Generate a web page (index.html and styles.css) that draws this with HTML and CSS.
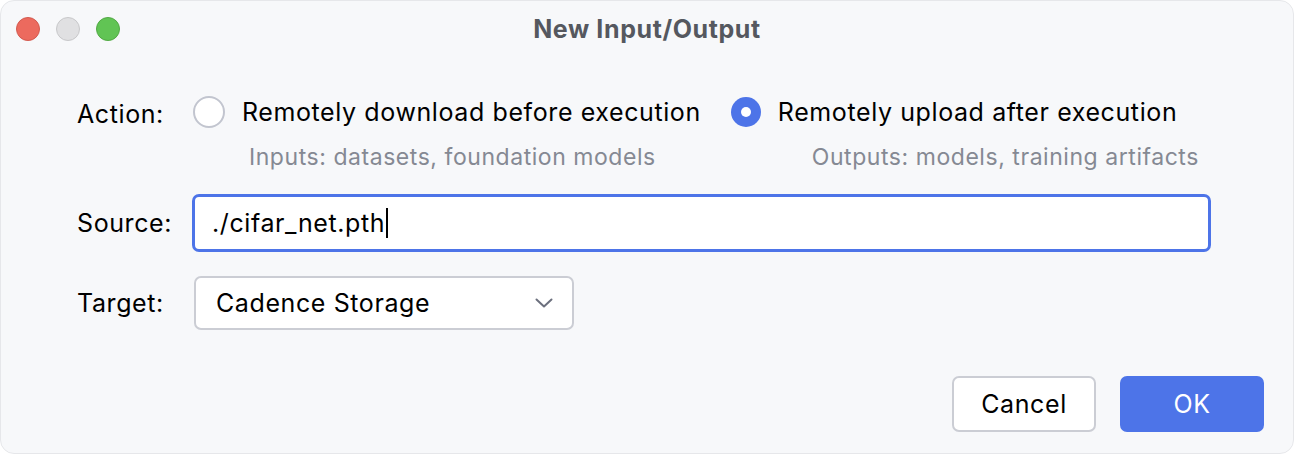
FILE: index.html
```html
<!DOCTYPE html>
<html lang="en">
<head>
  <meta charset="UTF-8"/>
  <title>New Input/Output</title>
  <link rel="stylesheet" href="styles.css">
</head>
<body>
  <div class="window">
    <div class="titlebar">
      <div class="lights">
        <span class="light red"></span>
        <span class="light gray"></span>
        <span class="light green"></span>
      </div>
      <div class="title">New Input/Output</div>
      <div></div>
    </div>

    <div class="form">
      <div class="label label-action">Action:</div>
      <div class="options">
        <div class="option">
          <div class="radio-line">
            <span class="radio"></span>
            <span>Remotely download before execution</span>
          </div>
          <div class="hint hint-in">Inputs: datasets, foundation models</div>
        </div>
        <div class="option">
          <div class="radio-line">
            <span class="radio checked"></span>
            <span>Remotely upload after execution</span>
          </div>
          <div class="hint hint-out">Outputs: models, training artifacts</div>
        </div>
      </div>

      <div class="label">Source:</div>
      <div class="field">./cifar_net.pth<span class="caret"></span></div>

      <div class="label">Target:</div>
      <div class="select-wrap">
        <div class="select">
          <span>Cadence Storage</span>
          <svg width="18" height="10" viewBox="0 0 18 10"><path d="M1.5 1.5 L9 8.5 L16.5 1.5" fill="none" stroke="#6c707e" stroke-width="2" stroke-linecap="round" stroke-linejoin="round"/></svg>
        </div>
      </div>
    </div>

    <div class="buttons">
      <button class="btn">Cancel</button>
      <button class="btn primary">OK</button>
    </div>
  </div>
</body>
</html>
```

FILE: styles.css
```css
html, body { margin: 0; height: 100%; background: #fff; }
body { font-family: Inter, "Noto Sans", sans-serif; color: #000; }
.window { box-sizing: border-box; height: 454px; background: #f7f8fa; border-radius: 14px; border: 1px solid #e6e7ea; display: flex; flex-direction: column; }

.titlebar { display: grid; grid-template-columns: 1fr auto 1fr; align-items: center; height: 55px; }
.lights { display: flex; gap: 16px; padding-left: 15px; }
.light { width: 24px; height: 24px; border-radius: 50%; box-sizing: border-box; }
.red { background: #ec6a5e; border: 1px solid #d35a4f; }
.gray { background: #e0e0e2; border: 1px solid #c8c8ca; }
.green { background: #61c454; border: 1px solid #52a944; }
.title { font-size: 25px; font-weight: 700; color: #55585f; letter-spacing: 0.6px; }

.form { display: grid; grid-template-columns: 116px 1fr; row-gap: 24px; padding: 39px 82px 0 76px; font-size: 25px; letter-spacing: 0.6px; align-items: center; }
.label-action { align-self: start; padding-top: 4px; }

.options { display: flex; gap: 29px; }
.radio-line { display: flex; align-items: center; gap: 17px; height: 34px; }
.radio { width: 32px; height: 32px; box-sizing: border-box; border-radius: 50%; border: 2px solid #c2c5cf; background: #fff; flex: none; }
.radio.checked { width: 30px; height: 30px; margin-left: 1px; border: none; background: #4d74e8; position: relative; }
.radio.checked::after { content: ""; position: absolute; left: 10px; top: 10px; width: 10px; height: 10px; border-radius: 50%; background: #fff; }
.hint { font-size: 23px; line-height: 26px; letter-spacing: 0.55px; color: #858993; margin-top: 15px; }
.hint-in { padding-left: 56px; }
.hint-out { padding-left: 82px; }

.field { height: 58px; box-sizing: border-box; border: 3px solid #4d74e8; border-radius: 7px; background: #fff; display: flex; align-items: center; padding-left: 17px; margin-left: -1px; }
.caret { display: inline-block; width: 2px; height: 30px; background: #000; margin-left: 1px; }

.select { width: 380px; height: 54px; margin-left: 1px; box-sizing: border-box; border: 2px solid #cbcdd4; border-radius: 7px; background: #fff; display: flex; align-items: center; justify-content: space-between; padding: 0 19px 0 20px; }

.buttons { display: flex; justify-content: flex-end; gap: 24px; padding: 46px 29px 0 0; }
.btn { font-family: inherit; font-size: 25px; letter-spacing: 0.6px; width: 144px; height: 56px; border-radius: 7px; border: 2px solid #cbcdd4; background: #fff; color: #000; }
.btn.primary { background: #4d74e8; border-color: #4d74e8; color: #fff; }
```
